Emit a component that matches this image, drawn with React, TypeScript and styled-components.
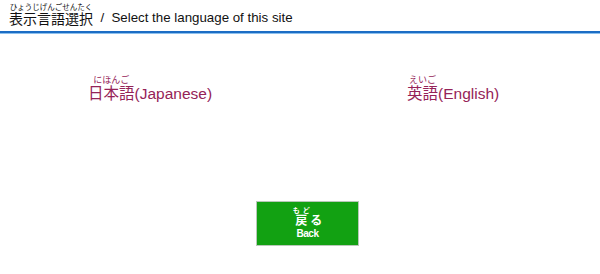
import styled, { createGlobalStyle } from "styled-components"

const GlobalStyle = createGlobalStyle`
  body {
    margin: 0;
    background: #fff;
    font-family: "Liberation Sans", "Noto Sans CJK JP", sans-serif;
  }
`

const Page = styled.div`
  width: 600px; height: 274px;
  display: flex; flex-direction: column;
`

const Header = styled.header`
  height: 31px;
  padding-left: 9px;
  display: flex; align-items: flex-end;
  border-bottom: 2px solid #1c6dc4;
  box-shadow: 0 1px 0 #8cc0ee;
  color: #111;
`

const Heading = styled.h1`
  margin: 0 0 6px;
  font-size: 14px; font-weight: normal;
  display: flex; align-items: flex-end;
  line-height: 1;
`

const Jp = styled.span`
  font-family: "Noto Sans CJK JP", sans-serif;
  font-size: 14px;
`

const Rb = styled.ruby<{ $size: number }>`
  ruby-position: over;
  ruby-align: center;
  rt {
    font-size: ${p => p.$size}px;
    line-height: 1.3;
    font-family: "Noto Sans CJK JP", sans-serif;
    ruby-align: center;
  }
`

const Sub = styled.span`
  margin-bottom: 1px;
  font-size: 13.3px;
  white-space: pre;
  font-family: "Liberation Sans", Arial, sans-serif;
`

const Languages = styled.div`
  display: grid;
  grid-template-columns: 319px 1fr;
  padding: 42px 0 0 88px;
`

const LangLink = styled.a`
  color: #952358;
  font-size: 15.5px;
  text-decoration: none;
  line-height: 1;
  cursor: pointer;
  font-family: "Liberation Sans", "Noto Sans CJK JP", sans-serif;
`

const Footer = styled.div`
  display: flex;
  padding: 99px 0 0 256px;
`

const BackButton = styled.button`
  width: 103px; height: 45px;
  background: #12a112;
  border: 1px solid #b9c8b9;
  color: #fff;
  font-weight: bold;
  display: flex; flex-direction: column; align-items: center; justify-content: center;
  padding: 0 0 2px; gap: 2px;
  cursor: pointer;
  font-family: "Liberation Sans", "Noto Sans CJK JP", sans-serif;
`

const BackJp = styled.span`
  font-size: 12px; line-height: 1;
  letter-spacing: 3px;
  margin-right: -3px;
`

const BackEn = styled.span`
  font-size: 10px; line-height: 1;
  letter-spacing: -0.5px;
`

const App = () => {
  return (
    <>
      <GlobalStyle />
      <Page>
        <Header>
          <Heading>
            <Jp>
              <Rb $size={7.5}>表示言語選択<rt>ひょうじげんごせんたく</rt></Rb>
            </Jp>
            <Sub>{"  /  Select the language of this site"}</Sub>
          </Heading>
        </Header>

        <Languages>
          <LangLink>
            <Rb $size={9}>日本語<rt>にほんご</rt></Rb>(Japanese)
          </LangLink>
          <LangLink>
            <Rb $size={9}>英語<rt>えいご</rt></Rb>(English)
          </LangLink>
        </Languages>

        <Footer>
          <BackButton>
            <BackJp>
              <Rb $size={7}>戻<rt>もど</rt></Rb>る
            </BackJp>
            <BackEn>Back</BackEn>
          </BackButton>
        </Footer>
      </Page>
    </>
  )
}

export default App
